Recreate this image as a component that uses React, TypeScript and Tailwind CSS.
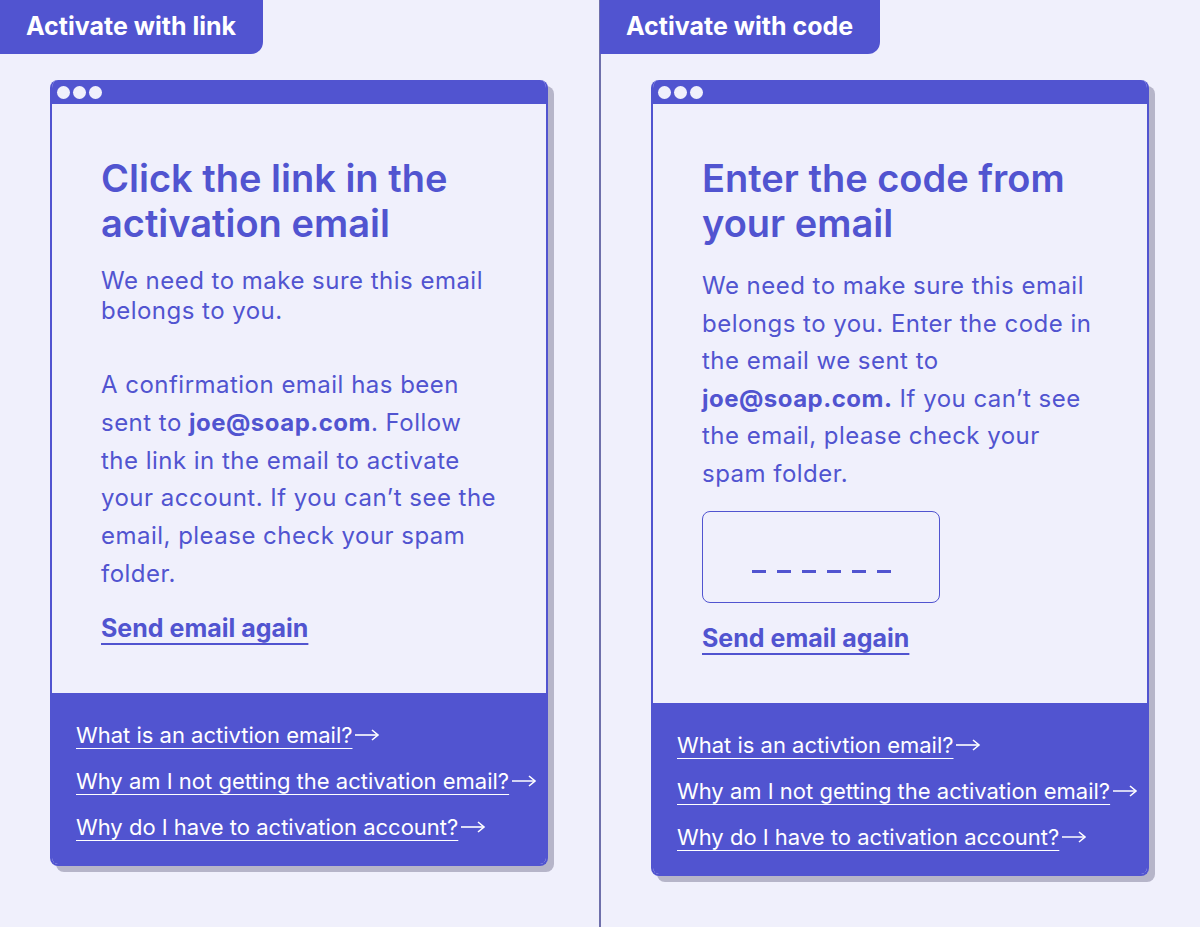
import React from "react";

const links = [
  "What is an activtion email?",
  "Why am I not getting the activation email?",
  "Why do I have to activation account?",
];

function Tab({ label }: { label: string }) {
  return (
    <div className="h-[54px] self-start rounded-br-[12px] bg-[#5154d0] pl-[26px] pr-[27px] flex items-center">
      <span className="text-[25px] font-bold text-white">{label}</span>
    </div>
  );
}

function Arrow() {
  return (
    <svg width="26" height="14" viewBox="0 0 26 14" className="ml-[2px]" fill="none" stroke="white" strokeWidth="1.6">
      <path d="M1 7h23" />
      <path d="M18 2l6 5-6 5" />
    </svg>
  );
}

function Card({ children }: { children: React.ReactNode }) {
  return (
    <div className="relative w-[498px]">
      <div className="absolute left-[6px] top-[6px] h-full w-full rounded-[8px] bg-[#b6b5c9]" />
      <div className="relative flex flex-col overflow-hidden rounded-[8px] border-2 border-t-0 border-[#5154d0] bg-[#f0f0fc]">
        <div className="flex h-[24px] items-center gap-[3px] bg-[#5154d0] pl-[5px]">
          <span className="h-[13px] w-[13px] rounded-full bg-[#f0f0fc]" />
          <span className="h-[13px] w-[13px] rounded-full bg-[#f0f0fc]" />
          <span className="h-[13px] w-[13px] rounded-full bg-[#f0f0fc]" />
        </div>
        {children}
        <div className="flex flex-col gap-[16px] bg-[#5154d0] pb-[22px] pl-[24px] pt-[27px]">
          {links.map((l) => (
            <div key={l} className="flex items-center text-[22px] leading-[30px] text-white">
              <span className="underline decoration-1 underline-offset-[5px]">{l}</span>
              <Arrow />
            </div>
          ))}
        </div>
      </div>
    </div>
  );
}

function SendAgain() {
  return (
    <a className="self-start text-[25px] font-bold leading-[30px] text-[#5154d0] underline decoration-2 underline-offset-[6px]">
      Send email again
    </a>
  );
}

export default function App() {
  return (
    <div className="flex h-[927px] w-[1200px] bg-[#f0f0fc] font-['Inter',sans-serif] text-[#5154d0]">
      <div className="flex w-[599px] flex-col">
        <Tab label="Activate with link" />
        <div className="pl-[50px] pt-[26px]">
          <Card>
            <div className="flex flex-col px-[49px] pb-[50px] pt-[52px]">
              <h1 className="text-[38px] font-semibold leading-[45px]">
                Click the link in the activation email
              </h1>
              <p className="mt-[20px] text-[24px] leading-[30px] tracking-[0.02em]">
                We need to make sure this email belongs to you.
              </p>
              <p className="mt-[40px] text-[24px] leading-[37.8px] tracking-[0.02em]">
                A confirmation email has been sent to <b className="font-bold">joe@soap.com</b>. Follow the link in the email to activate your account. If you can’t see the email, please check your spam folder.
              </p>
              <div className="mt-[20px] flex">
                <SendAgain />
              </div>
            </div>
          </Card>
        </div>
      </div>
      <div className="w-[2px] self-stretch bg-[#6f70ab]" />
      <div className="-ml-[1px] flex flex-1 flex-col">
        <Tab label="Activate with code" />
        <div className="pl-[51px] pt-[26px]">
          <Card>
            <div className="flex flex-col px-[49px] pb-[50px] pt-[52px]">
              <h1 className="text-[38px] font-semibold leading-[45px]">
                Enter the code from your email
              </h1>
              <p className="mt-[21px] text-[24px] leading-[37.6px] tracking-[0.02em]">
                We need to make sure this email belongs to you. Enter the code in the email we sent to <b className="font-bold">joe@soap.com.</b> If you can’t see the email, please check your spam folder.
              </p>
              <div className="mt-[18px] flex h-[92px] w-[238px] items-end justify-center gap-[11px] rounded-[8px] border-[1.5px] border-[#5154d0] pb-[29px]">
                {[0, 1, 2, 3, 4, 5].map((i) => (
                  <span key={i} className="h-[3px] w-[14px] bg-[#5154d0]" />
                ))}
              </div>
              <div className="mt-[20px] flex">
                <SendAgain />
              </div>
            </div>
          </Card>
        </div>
      </div>
    </div>
  );
}
